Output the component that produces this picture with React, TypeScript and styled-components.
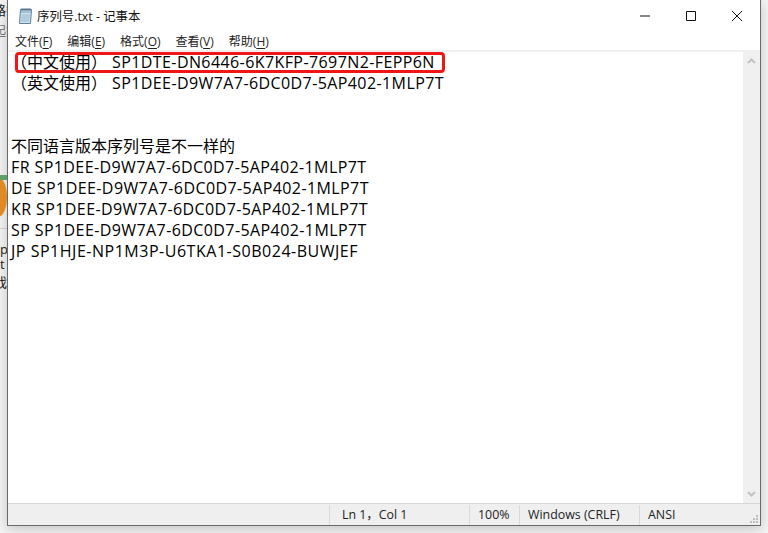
import React from "react";
import styled, {createGlobalStyle} from "styled-components";

const GlobalStyle = createGlobalStyle`
  html, body {
    margin: 0;
    padding: 0;
    background: #f2f2f2;
  }
`

const FONT = `"Open Sans", "Noto Sans CJK SC", sans-serif`

const Desktop = styled.div`
  display: flex;
  align-items: flex-start;
  width: 768px;
  height: 533px;
  overflow: hidden;
  background: #f4f4f4;
  font-family: ${FONT};
`

const Sliver = styled.div`
  display: flex;
  flex-direction: column;
  width: 7px;
  height: 533px;
  flex-shrink: 0;
  overflow: hidden;
  font-size: 13px;
  color: #222;
`

const SliverText = styled.div<{ $top: number; $left?: number; $muted?: boolean }>`
  margin-top: ${p => p.$top}px;
  margin-left: ${p => p.$left ?? 0}px;
  height: 14px;
  line-height: 14px;
  white-space: nowrap;
  color: ${p => p.$muted ? "#777" : "#222"};
`

const Fruit = styled.div`
  position: relative;
  width: 18px;
  height: 40px;
  margin-top: 140px;
  margin-left: -11px;
  border-radius: 50%;
  background: #df8a22;
  flex-shrink: 0;

  &::before {
    content: "";
    position: absolute;
    top: -2px;
    right: -1px;
    width: 8px;
    height: 5px;
    background: #5f9f6a;
  }
`

const Divider = styled.div`
  height: 1px;
  margin-top: 11px;
  background: #d5d5d5;
  flex-shrink: 0;
`

const Window = styled.div`
  display: flex;
  flex-direction: column;
  width: 754px;
  height: 526px;
  box-sizing: border-box;
  flex-shrink: 0;
  border: 1px solid #6a6a6a;
  border-top: none;
  background: #fff;
  box-shadow: 0 3px 12px rgba(0, 0, 0, 0.2);
`

const TitleBar = styled.div`
  display: flex;
  align-items: center;
  height: 31px;
  flex-shrink: 0;
`

const TitleIcon = styled.svg`
  width: 17px;
  height: 18px;
  margin-left: 9px;
  margin-right: 3px;
`

const TitleText = styled.div`
  flex: 1;
  font-size: 12.4px;
  color: #111;
`

const WindowButton = styled.div`
  display: flex;
  align-items: center;
  justify-content: center;
  width: 46px;
  height: 31px;
`

const MenuBar = styled.div`
  display: flex;
  align-items: center;
  height: 19px;
  flex-shrink: 0;
  padding-left: 7px;
  gap: 15px;
  border-bottom: 2px solid #f0f0f0;
`

const MenuItem = styled.span`
  font-size: 12px;
  color: #222;

  u {
    text-underline-offset: 2px;
  }
`

const Body = styled.div`
  display: flex;
  flex: 1;
  min-height: 0;
`

const TextArea = styled.div`
  position: relative;
  flex: 1;
  padding-left: 3px;
  font-size: 16px;
  line-height: 21px;
  color: #000;
  white-space: pre;
`

const Highlight = styled.div`
  position: absolute;
  left: 7px;
  top: 0;
  width: 430px;
  height: 21px;
  box-sizing: border-box;
  border: 3px solid #f01616;
  border-radius: 4px;
`

const Line = styled.div`
  height: 21px;
`

const Serial = styled.span<{ $gap?: number; $spacing?: number }>`
  letter-spacing: ${p => p.$spacing ?? 0.41}px;
  margin-left: ${p => p.$gap ?? 0}px;
`

const ScrollBar = styled.div`
  display: flex;
  flex-direction: column;
  justify-content: space-between;
  align-items: center;
  width: 17px;
  flex-shrink: 0;
  background: #f0f0f0;
  padding: 6px 0;
  box-sizing: border-box;
`

const StatusBar = styled.div`
  display: flex;
  align-items: center;
  height: 22px;
  flex-shrink: 0;
  border-top: 1px solid #d7d7d7;
  box-sizing: border-box;
  background: #efefef;
  font-size: 12.4px;
  color: #222;
`

const StatusCell = styled.div<{ $width: number; $pad?: number }>`
  width: ${p => p.$width}px;
  height: 20px;
  line-height: 20px;
  box-sizing: border-box;
  padding-left: ${p => p.$pad ?? 8}px;
  border-left: 1px solid #d9d9d9;
  flex-shrink: 0;
`

const StatusSpacer = styled.div`
  width: 321px;
  flex-shrink: 0;
`

const Grip = styled.svg`
  width: 10px;
  height: 10px;
  margin-left: auto;
  margin-top: 9px;
  margin-right: 1px;
`

const rows: [string, string, number?][] = [
    ["FR", "SP1DEE-D9W7A7-6DC0D7-5AP402-1MLP7T"],
    ["DE", "SP1DEE-D9W7A7-6DC0D7-5AP402-1MLP7T"],
    ["KR", "SP1DEE-D9W7A7-6DC0D7-5AP402-1MLP7T"],
    ["SP", "SP1DEE-D9W7A7-6DC0D7-5AP402-1MLP7T"],
    ["JP", "SP1HJE-NP1M3P-U6TKA1-S0B024-BUWJEF", 0.52],
]

const menus: [string, string][] = [["文件", "F"], ["编辑", "E"], ["格式", "O"], ["查看", "V"], ["帮助", "H"]]

export default function App() {
    return <Desktop>
        <GlobalStyle/>
        <Sliver>
            <SliverText $top={3} $left={-7}>路径</SliverText>
            <SliverText $top={6} $left={-7} $muted>起始</SliverText>
            <Fruit/>
            <Divider/>
            <SliverText $top={13}>p</SliverText>
            <SliverText $top={1}>t</SliverText>
            <SliverText $top={4} $left={-6}>戏</SliverText>
        </Sliver>
        <Window>
            <TitleBar>
                <TitleIcon viewBox="0 0 17 18">
                    <path d="M3.5 2.5h11l-1 14h-11z" fill="#cfe6f2" stroke="#5f7f95"/>
                    <path d="M4 5h10" stroke="#8fb4cc" strokeWidth="1.5"/>
                    <path d="M4.5 8h8.5M4.3 10h8.5M4.1 12h8.5M3.9 14h8.5" stroke="#86a8bd" strokeWidth="0.8"/>
                    <path d="M5 1v3M7 1v3M9 1v3M11 1v3M13 1v3" stroke="#4e6a80" strokeWidth="0.9"/>
                </TitleIcon>
                <TitleText>序列号.txt - 记事本</TitleText>
                <WindowButton>
                    <svg width="10" height="10" viewBox="0 0 10 10"><path d="M0 5h10" stroke="#111"/></svg>
                </WindowButton>
                <WindowButton>
                    <svg width="10" height="10" viewBox="0 0 10 10"><path d="M.5.5h9v9h-9z" fill="none" stroke="#111"/></svg>
                </WindowButton>
                <WindowButton>
                    <svg width="10" height="10" viewBox="0 0 10 10"><path d="M0 0l10 10M10 0L0 10" stroke="#111"/></svg>
                </WindowButton>
            </TitleBar>
            <MenuBar>
                {menus.map(([label, key]) =>
                    <MenuItem key={key}>{label}(<u>{key}</u>)</MenuItem>
                )}
            </MenuBar>
            <Body>
                <TextArea>
                    <Highlight/>
                    <Line>（中文使用）<Serial $gap={5}>SP1DTE-DN6446-6K7KFP-7697N2-FEPP6N</Serial></Line>
                    <Line>（英文使用）<Serial $gap={5}>SP1DEE-D9W7A7-6DC0D7-5AP402-1MLP7T</Serial></Line>
                    <Line/>
                    <Line/>
                    <Line>不同语言版本序列号是不一样的</Line>
                    {rows.map(([code, serial, spacing]) =>
                        <Line key={code}><Serial $spacing={spacing}>{code} {serial}</Serial></Line>
                    )}
                </TextArea>
                <ScrollBar>
                    <svg width="9" height="6" viewBox="0 0 9 6"><path d="M1 5l3.5-3.5L8 5" fill="none" stroke="#c2c2c2" strokeWidth="2"/></svg>
                    <svg width="9" height="6" viewBox="0 0 9 6"><path d="M1 1l3.5 3.5L8 1" fill="none" stroke="#c2c2c2" strokeWidth="2"/></svg>
                </ScrollBar>
            </Body>
            <StatusBar>
                <StatusSpacer/>
                <StatusCell $width={140} $pad={12}>Ln 1，Col 1</StatusCell>
                <StatusCell $width={50}>100%</StatusCell>
                <StatusCell $width={120}>Windows (CRLF)</StatusCell>
                <StatusCell $width={80}>ANSI</StatusCell>
                <Grip viewBox="0 0 10 10">
                    <path d="M7 1h2v2H7zM4 4h2v2H4zM7 4h2v2H7zM1 7h2v2H1zM4 7h2v2H4zM7 7h2v2H7z" fill="#bdbdbd"/>
                </Grip>
            </StatusBar>
        </Window>
    </Desktop>
}
